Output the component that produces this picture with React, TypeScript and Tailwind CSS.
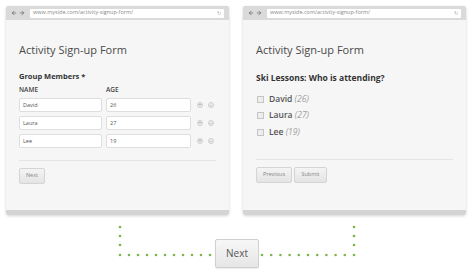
import React from "react";
import { ArrowLeft, ArrowRight } from "lucide-react";

const font = "font-['Open_Sans','Liberation_Sans',sans-serif]";

function Toolbar() {
  return (
    <div className="flex h-[14px] items-center gap-[5px] rounded-t-[2px] bg-[#dadada] px-[5px]">
      <div className="flex items-center gap-[2px] text-[#6e6e6e]">
        <ArrowLeft className="h-[6px] w-[6px]" strokeWidth={3} />
        <ArrowRight className="h-[6px] w-[6px]" strokeWidth={3} />
      </div>
      <div className="flex h-[9px] flex-1 items-center justify-between rounded-[1px] bg-white px-[3px]">
        <span className="text-[5.5px] leading-none text-[#8a8a8a]">www.myside.com/activity-signup-form/</span>
        <span className="text-[5px] leading-none text-[#aaa]">↻</span>
      </div>
    </div>
  );
}

function Btn({ children, className = "" }: { children: React.ReactNode; className?: string }) {
  return (
    <div
      className={`flex h-[16px] items-center justify-center rounded-[2px] border border-[#d4d4d4] bg-gradient-to-b from-[#f4f4f4] to-[#e4e4e4] text-[5.5px] leading-none text-[#888] ${className}`}
    >
      {children}
    </div>
  );
}

function Window({ children }: { children: React.ReactNode }) {
  return (
    <div className="flex h-[209px] w-[223px] flex-col rounded-[3px] bg-[#f6f6f6] shadow-[0_1px_3px_rgba(0,0,0,0.18)]">
      <Toolbar />
      <div className="flex flex-1 flex-col px-[13px]">{children}</div>
      <div className="h-[5px] rounded-b-[3px] bg-[#d4d4d4]" />
    </div>
  );
}

function Title() {
  return <div className="mt-[22px] text-[11px] leading-[15px] text-[#4a4a4a]">Activity Sign-up Form</div>;
}

function RoundIcon({ sign }: { sign: string }) {
  return (
    <div className="flex h-[6px] w-[6px] items-center justify-center rounded-full border border-[#cfcfcf] bg-[#ececec] text-[5px] leading-none text-[#999]">
      {sign}
    </div>
  );
}

const members = [
  { name: "David", age: "26" },
  { name: "Laura", age: "27" },
  { name: "Lee", age: "19" },
];

function GroupForm() {
  return (
    <Window>
      <Title />
      <div className="mt-[14px] text-[7.5px] font-bold leading-[10px] text-[#333]">
        Group Members <span>*</span>
      </div>
      <div className="mt-[5px] flex text-[6.5px] font-semibold leading-[8px] text-[#444]">
        <span className="w-[87px]">NAME</span>
        <span>AGE</span>
      </div>
      <div className="mt-[4px] flex flex-col gap-[4px]">
        {members.map((m) => (
          <div key={m.name} className="flex items-center">
            <div className="flex h-[14px] w-[83px] items-center rounded-[2px] border border-[#dedede] bg-white px-[3px] text-[5.5px] text-[#555]">
              {m.name}
            </div>
            <div className="ml-[4px] flex h-[14px] w-[85px] items-center rounded-[2px] border border-[#dedede] bg-white px-[3px] text-[5.5px] text-[#555]">
              {m.age}
            </div>
            <div className="ml-[6px] flex gap-[5px]">
              <RoundIcon sign="+" />
              <RoundIcon sign="−" />
            </div>
          </div>
        ))}
      </div>
      <div className="mt-[12px] h-px bg-[#e4e4e4]" />
      <div className="mt-[7px] flex">
        <Btn className="w-[26px]">Next</Btn>
      </div>
    </Window>
  );
}

function Attending() {
  return (
    <Window>
      <Title />
      <div className="mt-[15px] text-[8.5px] font-bold leading-[11px] text-[#333]">Ski Lessons: Who is attending?</div>
      <div className="mt-[10px] flex flex-col gap-[4.5px] pl-[1px]">
        {members.map((m) => (
          <div key={m.name} className="flex h-[12px] items-center gap-[5px]">
            <div className="h-[7px] w-[7px] border border-[#c4c4c4] bg-[#eeeeee]" />
            <span className="text-[8.5px] font-semibold text-[#555]">
              {m.name} <span className="font-normal italic text-[#a0a0a0]">({m.age})</span>
            </span>
          </div>
        ))}
      </div>
      <div className="mt-[21px] h-px bg-[#e4e4e4]" />
      <div className="mt-[7px] flex gap-[2px]">
        <Btn className="w-[36px]">Previous</Btn>
        <Btn className="w-[33px]">Submit</Btn>
      </div>
    </Window>
  );
}

function Connector() {
  const dots: { x: number; y: number }[] = [];
  [227, 236, 245].forEach((y) => {
    dots.push({ x: 120, y });
    dots.push({ x: 354, y });
  });
  for (let i = 0; i <= 10; i++) dots.push({ x: 120 + i * 9, y: 255 });
  for (let i = 0; i <= 10; i++) dots.push({ x: 262 + i * 9.2, y: 255 });
  return (
    <svg className="absolute left-0 top-0" width="474" height="280" viewBox="0 0 474 280">
      {dots.map((d, i) => (
        <circle key={i} cx={d.x} cy={d.y} r="1.3" fill="#7fb447" />
      ))}
    </svg>
  );
}

export default function App() {
  return (
    <div className={`relative h-[280px] w-[474px] overflow-hidden bg-white ${font}`}>
      <Connector />
      <div className="relative flex gap-[14px] pl-[6px] pt-[6px]">
        <GroupForm />
        <Attending />
      </div>
      <div className="relative mt-[24px] flex justify-center">
        <div className="flex h-[29px] w-[44px] items-center justify-center rounded-[2px] border border-[#d0d0d0] bg-gradient-to-b from-[#f7f7f7] to-[#e6e6e6] text-[10px] text-[#555] shadow-[0_1px_1px_rgba(0,0,0,0.08)]">
          Next
        </div>
      </div>
    </div>
  );
}
